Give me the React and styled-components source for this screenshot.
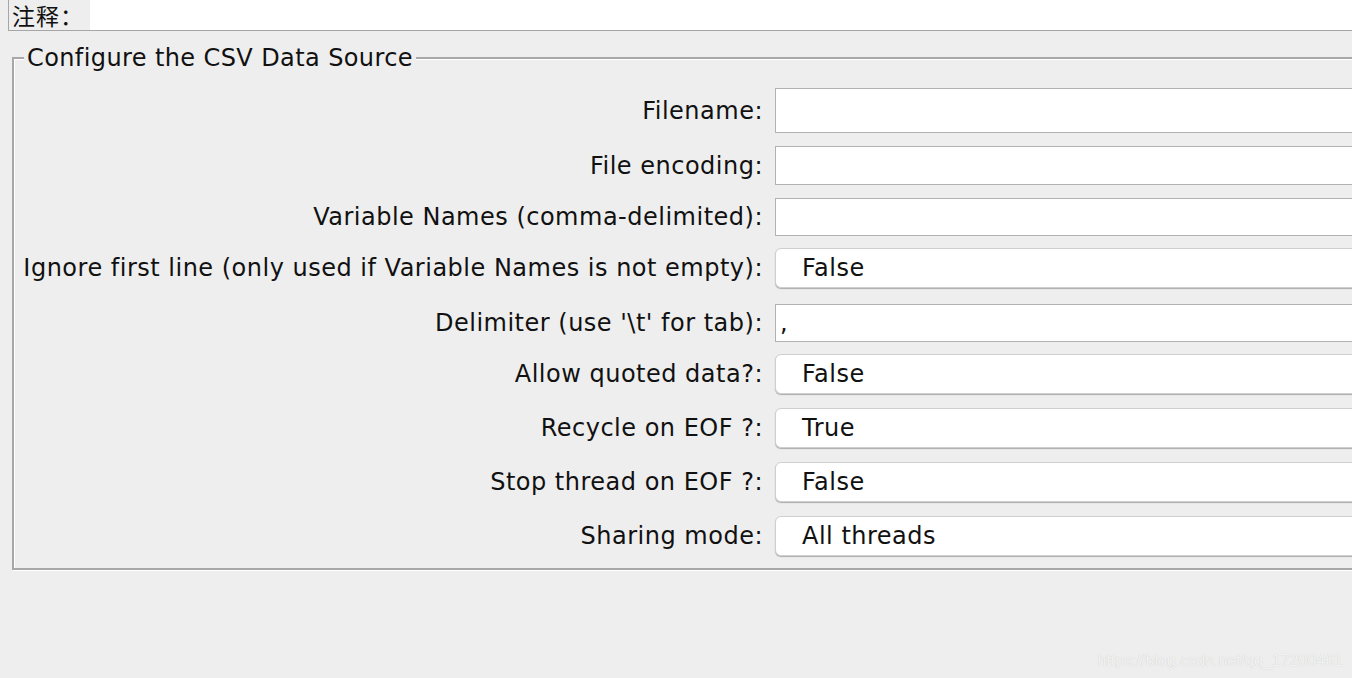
import React from "react";
import styled, { createGlobalStyle } from "styled-components";

const Global = createGlobalStyle`
  html, body { margin: 0; padding: 0; background: #eeeeee; }
  body { font-family: "DejaVu Sans", "Noto Sans CJK SC", sans-serif; color: #111; }
  #root { width: 1352px; height: 678px; overflow: hidden; }
`;

const Page = styled.div`
  position: relative;
  width: 1352px;
  height: 678px;
  overflow: hidden;
  background: #eeeeee;
`;

const CommentBar = styled.div`
  display: flex;
  margin-left: 8px;
  height: 30px;
  border-left: 1px solid #a6a6a6;
  border-bottom: 1px solid #a6a6a6;
`;

const CommentLabel = styled.div`
  width: 81px;
  padding-left: 3px;
  box-sizing: border-box;
  background: #eeeeee;
  font-family: "Noto Sans CJK SC", "DejaVu Sans", sans-serif;
  font-size: 23px;
  line-height: 30px;
  letter-spacing: 1px;
`;

const CommentInput = styled.div`
  flex: 1;
  background: #ffffff;
`;

const Frame = styled.fieldset`
  margin: 13px 0 0 12px;
  width: 1420px;
  padding: 0 0 12px 0;
  border: 2px solid #a8a8a8;
  box-shadow: inset 1px 1px 0 #ffffff, 1px 1px 0 #ffffff;
  min-inline-size: 0;
`;

const Title = styled.legend`
  margin-left: 10px;
  padding: 0 3px 0 3px;
  background: #eeeeee;
  font-size: 24px;
  letter-spacing: 0.4px;
  line-height: 28px;
`;

const Row = styled.div`
  display: grid;
  grid-template-columns: 749px 1fr;
  column-gap: 12px;
  align-items: center;
  margin-top: ${(p) => p.$gap}px;
  height: ${(p) => p.$h}px;
`;

const Label = styled.div`
  text-align: right;
  font-size: 24px;
  letter-spacing: 0.5px;
  white-space: nowrap;
`;

const TextField = styled.div`
  height: 100%;
  box-sizing: border-box;
  background: #ffffff;
  border: 1px solid #b2b2b2;
  padding-left: 4px;
  font-size: 24px;
  display: flex;
  align-items: center;
`;

const Combo = styled.div`
  height: 100%;
  box-sizing: border-box;
  background: #ffffff;
  border: 1px solid #cfcfcf;
  border-radius: 6px;
  box-shadow: 0 1px 1px rgba(0, 0, 0, 0.28);
  padding-left: 26px;
  font-size: 24px;
  letter-spacing: 0.5px;
  display: flex;
  align-items: center;
`;

const Watermark = styled.div`
  position: absolute;
  right: 9px;
  bottom: 8px;
  font-family: "Liberation Sans", Arial, sans-serif;
  font-size: 16px;
  color: rgba(255, 255, 255, 0.8);
  text-shadow: 0 0 1px rgba(0, 0, 0, 0.2);
`;

const rows = [
  { label: "Filename:", type: "text", value: "", gap: 16, h: 45 },
  { label: "File encoding:", type: "text", value: "", gap: 13, h: 39 },
  { label: "Variable Names (comma-delimited):", type: "text", value: "", gap: 13, h: 38 },
  { label: "Ignore first line (only used if Variable Names is not empty):", type: "combo", value: "False", gap: 12, h: 40 },
  { label: "Delimiter (use '\\t' for tab):", type: "text", value: ",", gap: 16, h: 38 },
  { label: "Allow quoted data?:", type: "combo", value: "False", gap: 12, h: 40 },
  { label: "Recycle on EOF ?:", type: "combo", value: "True", gap: 14, h: 40 },
  { label: "Stop thread on EOF ?:", type: "combo", value: "False", gap: 14, h: 40 },
  { label: "Sharing mode:", type: "combo", value: "All threads", gap: 14, h: 40 },
];

export default function App() {
  return (
    <Page>
      <Global />
      <CommentBar>
        <CommentLabel>注释：</CommentLabel>
        <CommentInput />
      </CommentBar>
      <Frame>
        <Title>Configure the CSV Data Source</Title>
        {rows.map((r) => (
          <Row key={r.label} $gap={r.gap} $h={r.h}>
            <Label>{r.label}</Label>
            {r.type === "text" ? (
              <TextField>{r.value}</TextField>
            ) : (
              <Combo>{r.value}</Combo>
            )}
          </Row>
        ))}
      </Frame>
      <Watermark>https://blog.csdn.net/qq_17200461</Watermark>
    </Page>
  );
}
